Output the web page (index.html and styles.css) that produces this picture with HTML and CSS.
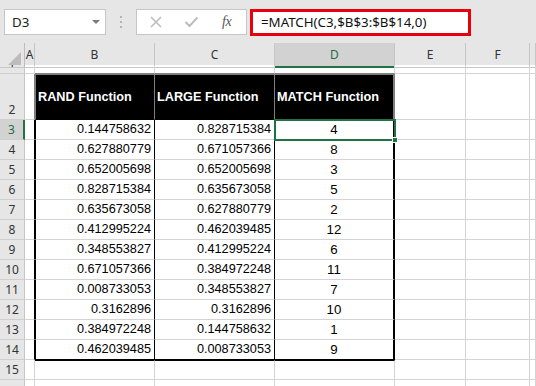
FILE: index.html
```html
<!DOCTYPE html>
<html>
<head>
<meta charset="utf-8">
<link rel="stylesheet" href="styles.css">
</head>
<body>
<div class="app">
  <div class="toolbar">
    <div class="namebox"><span>D3</span><span class="caret"></span></div>
    <div class="dots"><i></i><i></i><i></i></div>
    <div class="btns">
      <svg class="ico" width="14" height="14" viewBox="0 0 14 14"><path d="M2 2 L12 12 M12 2 L2 12" stroke="#bdbdbd" stroke-width="1.6" fill="none"/></svg>
      <svg class="ico" width="15" height="12" viewBox="0 0 15 12"><path d="M1.5 6 L5.5 10 L13.5 1.5" stroke="#bdbdbd" stroke-width="2" fill="none"/></svg>
      <span class="fx">fx</span>
    </div>
    <div class="formula">=MATCH(C3,$B$3:$B$14,0)</div>
  </div>
  <div class="sheet">
    <div class="row colhead">
      <div class="corner"><span class="tri"></span></div>
      <div class="ch">A</div><div class="ch">B</div><div class="ch">C</div><div class="ch csel">D</div><div class="ch">E</div><div class="ch">F</div><div class="ch"></div>
    </div>
    <div class="row r1">
      <div class="rh">1</div><div class="c"></div><div class="c hb"></div><div class="c hb"></div><div class="c hb"></div><div class="c"></div><div class="c"></div><div class="c"></div>
    </div>
    <div class="row r2">
      <div class="rh">2</div><div class="c ha"></div>
      <div class="c hd hl">RAND Function</div><div class="c hd">LARGE Function</div><div class="c hd hr">MATCH Function</div>
      <div class="c"></div><div class="c"></div><div class="c"></div>
    </div>
    <div class="row">
      <div class="rh rsel">3</div><div class="c ta"></div><div class="c n tl">0.144758632</div><div class="c n">0.828715384</div><div class="c m tr sel">4</div><div class="c"></div><div class="c"></div><div class="c"></div>
    </div>
    <div class="row">
      <div class="rh">4</div><div class="c ta"></div><div class="c n tl">0.627880779</div><div class="c n">0.671057366</div><div class="c m tr">8</div><div class="c"></div><div class="c"></div><div class="c"></div>
    </div>
    <div class="row">
      <div class="rh">5</div><div class="c ta"></div><div class="c n tl">0.652005698</div><div class="c n">0.652005698</div><div class="c m tr">3</div><div class="c"></div><div class="c"></div><div class="c"></div>
    </div>
    <div class="row">
      <div class="rh">6</div><div class="c ta"></div><div class="c n tl">0.828715384</div><div class="c n">0.635673058</div><div class="c m tr">5</div><div class="c"></div><div class="c"></div><div class="c"></div>
    </div>
    <div class="row">
      <div class="rh">7</div><div class="c ta"></div><div class="c n tl">0.635673058</div><div class="c n">0.627880779</div><div class="c m tr">2</div><div class="c"></div><div class="c"></div><div class="c"></div>
    </div>
    <div class="row">
      <div class="rh">8</div><div class="c ta"></div><div class="c n tl">0.412995224</div><div class="c n">0.462039485</div><div class="c m tr">12</div><div class="c"></div><div class="c"></div><div class="c"></div>
    </div>
    <div class="row">
      <div class="rh">9</div><div class="c ta"></div><div class="c n tl">0.348553827</div><div class="c n">0.412995224</div><div class="c m tr">6</div><div class="c"></div><div class="c"></div><div class="c"></div>
    </div>
    <div class="row">
      <div class="rh">10</div><div class="c ta"></div><div class="c n tl">0.671057366</div><div class="c n">0.384972248</div><div class="c m tr">11</div><div class="c"></div><div class="c"></div><div class="c"></div>
    </div>
    <div class="row">
      <div class="rh">11</div><div class="c ta"></div><div class="c n tl">0.008733053</div><div class="c n">0.348553827</div><div class="c m tr">7</div><div class="c"></div><div class="c"></div><div class="c"></div>
    </div>
    <div class="row">
      <div class="rh">12</div><div class="c ta"></div><div class="c n tl">0.3162896</div><div class="c n">0.3162896</div><div class="c m tr">10</div><div class="c"></div><div class="c"></div><div class="c"></div>
    </div>
    <div class="row">
      <div class="rh">13</div><div class="c ta"></div><div class="c n tl">0.384972248</div><div class="c n">0.144758632</div><div class="c m tr">1</div><div class="c"></div><div class="c"></div><div class="c"></div>
    </div>
    <div class="row">
      <div class="rh">14</div><div class="c ta"></div><div class="c n tl tbm">0.462039485</div><div class="c n tbm">0.008733053</div><div class="c m tr tbm">9</div><div class="c"></div><div class="c"></div><div class="c"></div>
    </div>
    <div class="row">
      <div class="rh">15</div><div class="c"></div><div class="c tt"></div><div class="c tt"></div><div class="c tt"></div><div class="c"></div><div class="c"></div><div class="c"></div>
    </div>
    <div class="row">
      <div class="rh"></div><div class="c"></div><div class="c"></div><div class="c"></div><div class="c"></div><div class="c"></div><div class="c"></div><div class="c"></div>
    </div>
  </div>
</div>
</body>
</html>
```

FILE: styles.css
```css
* { box-sizing: border-box; }
html, body { margin: 0; padding: 0; }
body { background: #e6e6e6; width: 536px; height: 386px; overflow: hidden; }
.app { width: 536px; height: 386px; overflow: hidden; display: flex; flex-direction: column; }

.toolbar {
  height: 43px;
  flex: none;
  display: flex;
  align-items: flex-start;
  padding: 9px 0 0 4px;
  font-family: "Noto Sans", sans-serif;
}
.namebox {
  width: 102px;
  height: 26px;
  background: #fff;
  border: 1px solid #c6c6c6;
  display: flex;
  align-items: center;
  justify-content: space-between;
  padding: 0 5px 0 7px;
  font-size: 13.3px;
  color: #222;
}
.caret {
  width: 0; height: 0;
  border-left: 4px solid transparent;
  border-right: 4px solid transparent;
  border-top: 4px solid #7a7a7a;
}
.dots {
  margin-left: 14px;
  height: 26px;
  display: flex;
  flex-direction: column;
  justify-content: center;
  gap: 3px;
}
.dots i { display: block; width: 2px; height: 2px; background: #b4b4b4; }
.btns {
  margin-left: 14px;
  width: 111px;
  height: 26px;
  background: #fff;
  border: 1px solid #c6c6c6;
  display: flex;
  align-items: center;
  padding-left: 12px;
  gap: 21px;
}
.fx {
  font-family: "Liberation Serif", serif;
  font-style: italic;
  font-size: 14px;
  color: #555;
  letter-spacing: -0.5px;
  margin-left: 2px;
}
.formula {
  margin-left: 3px;
  width: 221px;
  height: 27px;
  background: #fff;
  border: 3px solid #e8000b;
  font-size: 13.3px;
  color: #111;
  padding-left: 8px;
  line-height: 20px;
  white-space: nowrap;
}

.sheet { flex: 1; background: #fff; font-family: "Liberation Sans", Arial, sans-serif; font-size: 12.7px; color: #000; }
.row {
  display: grid;
  grid-template-columns: 25px 10px 120px 120px 120px 71px 64px 1fr;
  height: 20px;
}
.colhead { height: 22px; background: #e6e6e6; }
.r1 { height: 9px; }
.r2 { height: 46px; }

.corner {
  position: relative;
  border-right: 1px solid #bdbdbd;
  border-bottom: 1px solid #c6c6c6;
}
.tri {
  position: absolute;
  right: 3px; bottom: 2px;
  width: 0; height: 0;
  border-left: 13px solid transparent;
  border-bottom: 13px solid #bcbcbc;
}
.ch {
  border-right: 1px solid #c6c6c6;
  border-bottom: 1px solid #c6c6c6;
  font-family: "Noto Sans", sans-serif;
  font-size: 12px;
  color: #333;
  text-align: center;
  line-height: 22px;
  padding-top: 1px;
}
.ch.csel { background: #d2d2d2; border-bottom: 2px solid #217346; color: #1e6b40; }

.rh {
  background: #e6e6e6;
  border-right: 1px solid #c6c6c6;
  border-bottom: 1px solid #cfcfcf;
  font-family: "Noto Sans", sans-serif;
  font-size: 12px;
  color: #333;
  display: flex;
  align-items: flex-end;
  justify-content: center;
  line-height: 19px;
  overflow: hidden;
}
.rh.rsel { background: #d2d2d2; border-right: 2px solid #217346; color: #1e6b40; }

.c {
  border-right: 1px solid #d4d4d4;
  border-bottom: 1px solid #d4d4d4;
  white-space: nowrap;
  overflow: visible;
  line-height: 19px;
}
.hb { border-bottom-color: #7f7f7f; }
.ha { border-right-color: #7f7f7f; }
.hd {
  background: #000;
  color: #fff;
  font-weight: bold;
  border-right-color: #7f7f7f;
  border-top: 1px solid #7f7f7f;
  border-bottom-color: #000;
  display: flex;
  align-items: center;
  padding-left: 2px;
  padding-top: 1px;
}
.hl { border-left: 1px solid #7f7f7f; }
.hr { border-right: 2px solid #7f7f7f; }

.ta { border-right-color: #000; }
.tl { border-left: 1px solid #000; }
.n { text-align: right; padding-right: 3px; border-right-color: #000; }
.m { text-align: center; font-size: 13.3px; }
.tr { border-right: 2px solid #000; }
.tbm { border-bottom-color: #000; }
.tt { border-top: 1px solid #000; }

.sel {
  position: relative;
  outline: 2px solid #217346;
  outline-offset: -1px;
}
.sel::after {
  content: "";
  position: absolute;
  right: -5px;
  bottom: -4px;
  width: 4px;
  height: 4px;
  background: #217346;
  border: 1px solid #fff;
}
```
